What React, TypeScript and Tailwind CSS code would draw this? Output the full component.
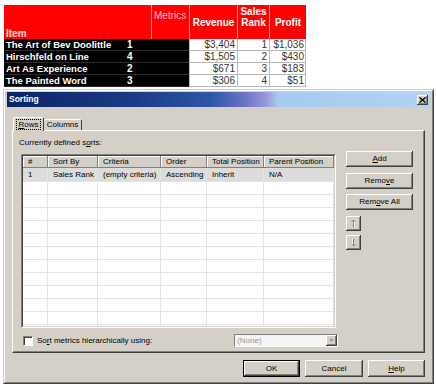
import React from "react";

const rows = [
  { name: "The Art of Bev Doolittle", id: "1", revenue: "$3,404", rank: "1", profit: "$1,036" },
  { name: "Hirschfeld on Line", id: "4", revenue: "$1,505", rank: "2", profit: "$430" },
  { name: "Art As Experience", id: "2", revenue: "$671", rank: "3", profit: "$183" },
  { name: "The Painted Word", id: "3", revenue: "$306", rank: "4", profit: "$51" },
];

const sortCols = [
  { label: "#", w: "w-[25px]" },
  { label: "Sort By", w: "w-[50px]" },
  { label: "Criteria", w: "w-[63px]" },
  { label: "Order", w: "w-[46px]" },
  { label: "Total Position", w: "w-[57px]" },
  { label: "Parent Position", w: "flex-1" },
];

const firstSort = ["1", "Sales Rank", "(empty criteria)", "Ascending", "Inherit", "N/A"];

const raised =
  "bg-[#d4d0c8] shadow-[inset_-1px_-1px_#404040,inset_1px_1px_#ffffff,inset_-2px_-2px_#808080,inset_2px_2px_#d4d0c8]";

export default function App() {
  return (
    <div className="w-[436px] h-[384px] overflow-hidden bg-white flex flex-col">
      <ReportGrid />
      <SortingDialog />
    </div>
  );
}

function ReportGrid() {
  return (
    <div className="ml-[4px] mt-[5px] w-[302px] font-['Liberation_Sans',Arial,sans-serif] text-[10px]">
      {/* header */}
      <div className="flex h-[34px] bg-[#ff0000]">
        <div className="w-[147px] flex flex-col justify-end pl-[2px] leading-[11px] font-bold text-[#ffe0e0]">
          Item
        </div>
        <div className="w-[38px] border-l border-[#ff9a9a] pl-[2px] pt-[5px] leading-[11px] text-[#ffc4c4]">
          Metrics
        </div>
        <div className="w-[48px] border-l border-[#ff9a9a] flex flex-col justify-end pb-[11px] leading-[11px] text-center font-bold text-white">
          Revenue
        </div>
        <div className="w-[32px] border-l border-[#ff9a9a] flex flex-col justify-end pb-[11px] leading-[11px] text-center font-bold text-white">
          <span>Sales</span>
          <span>Rank</span>
        </div>
        <div className="w-[37px] border-l border-[#ff9a9a] flex flex-col justify-end pb-[11px] leading-[11px] text-center font-bold text-white">
          Profit
        </div>
      </div>
      {/* body */}
      {rows.map((r) => (
        <div key={r.name} className="flex h-[12px] leading-[11px]">
          <div className="w-[123px] bg-black border-b border-[#2c2c2c] pl-[2px] text-[9.5px] font-bold text-white whitespace-nowrap">
            {r.name}
          </div>
          <div className="w-[62px] bg-black border-b border-[#2c2c2c] font-bold text-white">{r.id}</div>
          <div className="w-[48px] bg-white border-b border-l border-[#b8b8b8] pr-[2px] text-right text-[#333]">
            {r.revenue}
          </div>
          <div className="w-[32px] bg-white border-b border-l border-[#b8b8b8] pr-[2px] text-right text-[#333]">
            {r.rank}
          </div>
          <div className="w-[37px] bg-white border-b border-l border-r border-[#b8b8b8] pr-[1px] text-right text-[#333]">
            {r.profit}
          </div>
        </div>
      ))}
    </div>
  );
}

function SortingDialog() {
  return (
    <div className="ml-[3px] mt-[2px] w-[431px] h-[295px] flex flex-col bg-[#d4d0c8] border border-t-[#d4d0c8] border-l-[#d4d0c8] border-r-[#404040] border-b-[#404040] font-['Liberation_Sans',Arial,sans-serif] text-[8px] text-black">
      <div className="flex-1 flex flex-col border border-t-white border-l-white border-r-[#808080] border-b-[#808080] px-[2px] pt-[1px]">
        {/* title bar */}
        <div className="h-[15px] flex items-center justify-between pl-[2px] pr-[2px] bg-[linear-gradient(to_right,#0a246a_0%,#1c3a86_30%,#2e56a4_48%,#6a72c4_56%,#9a94dc_61%,#a6caf0_64%,#b2d2f4_100%)]">
          <span className="text-white font-bold text-[8.5px] leading-none">Sorting</span>
          <button className={`w-[11px] h-[10px] flex items-center justify-center ${raised}`}>
            <svg width="7" height="6" viewBox="0 0 7 6">
              <path d="M0.5 0.5 L6.5 5.5 M6.5 0.5 L0.5 5.5" stroke="black" strokeWidth="1.4" />
            </svg>
          </button>
        </div>

        <div className="flex-1 flex flex-col px-[5px] pt-[10px]">
          {/* tabs */}
          <div className="flex items-end h-[13px] pl-[1px] relative z-10">
            <div className="h-[14px] -mb-[1px] w-[31px] bg-[#d4d0c8] border-t border-l border-white border-r border-r-[#404040] rounded-t-[2px] flex items-center justify-center">
              <span className="border border-dotted border-black px-[1px] leading-[9px]">
                <u>R</u>ows
              </span>
            </div>
            <div className="h-[11px] w-[38px] bg-[#d4d0c8] border-t border-white border-r border-r-[#404040] rounded-t-[2px] flex items-center justify-center">
              Columns
            </div>
          </div>

          {/* tab panel */}
          <div className="h-[223px] flex flex-col border border-t-white border-l-white border-r-[#404040] border-b-[#404040]">
            <div className="flex-1 flex flex-col border-r border-b border-[#808080] pl-[8px] pr-[10px] pt-[7px]">
              <div className="-ml-[2px] leading-[10px]">
                Currently defined s<u>o</u>rts:
              </div>
              <div className="flex mt-[6px]">
                <SortList />
                <div className="ml-[10px] w-[67px] flex flex-col -mt-[3px]">
                  <WinButton className="h-[16px]">
                    <u>A</u>dd
                  </WinButton>
                  <WinButton className="h-[16px] mt-[6px]">
                    Remo<u>v</u>e
                  </WinButton>
                  <WinButton className="h-[16px] mt-[5px]">
                    Rem<u>o</u>ve All
                  </WinButton>
                  <ArrowButton up className="mt-[6px]" />
                  <ArrowButton className="mt-[4px]" />
                </div>
              </div>
              <div className="flex items-center mt-[6px] h-[13px]">
                <div className="ml-[2px] w-[10px] h-[10px] bg-white border border-t-[#808080] border-l-[#808080] border-r-white border-b-white shadow-[inset_1px_1px_#404040]" />
                <span className="ml-[4px]">
                  So<u>r</u>t metrics hierarchically using:
                </span>
                <div className="ml-[82px] w-[104px] h-[13px] flex items-stretch bg-[#f4f4f4] border border-t-[#808080] border-l-[#808080] border-r-white border-b-white">
                  <span className="flex-1 pl-[2px] leading-[11px] text-[#9a9a9a]">(None)</span>
                  <div className={`w-[11px] flex items-center justify-center ${raised}`}>
                    <svg width="5" height="3" viewBox="0 0 5 3">
                      <path d="M0 0 H5 L2.5 3 Z" fill="#9a9a9a" />
                    </svg>
                  </div>
                </div>
              </div>
            </div>
          </div>

          {/* bottom buttons */}
          <div className="flex justify-end gap-[5px] mt-[7px]">
            <div className="w-[57px] h-[17px] border border-black">
              <WinButton className="h-full w-full">OK</WinButton>
            </div>
            <WinButton className="w-[58px] h-[17px]">Cancel</WinButton>
            <WinButton className="w-[57px] h-[17px]">
              <u>H</u>elp
            </WinButton>
          </div>
        </div>
      </div>
    </div>
  );
}

function SortList() {
  const empty = Array.from({ length: 12 });
  return (
    <div className="w-[315px] h-[174px] border border-t-[#808080] border-l-[#808080] border-r-white border-b-white">
      <div className="h-full flex flex-col overflow-hidden bg-white border border-t-[#404040] border-l-[#404040] border-r-[#d4d0c8] border-b-[#d4d0c8]">
        <div className="flex h-[12px] shrink-0">
          {sortCols.map((c) => (
            <div
              key={c.label}
              className={`${c.w} bg-[#d4d0c8] pl-[5px] leading-[12px] whitespace-nowrap shadow-[inset_-1px_-1px_#808080,inset_1px_1px_#ffffff]`}
            >
              {c.label}
            </div>
          ))}
        </div>
        <div className="flex h-[14px] shrink-0 bg-[#dcdcdc] border-b border-[#e4e4e4]">
          {sortCols.map((c, i) => (
            <div key={c.label} className={`${c.w} pl-[5px] leading-[13px] whitespace-nowrap border-r border-[#e4e4e4]`}>
              {firstSort[i]}
            </div>
          ))}
        </div>
        {empty.map((_, k) => (
          <div key={k} className="flex h-[13px] shrink-0 border-b border-[#e4e4e4]">
            {sortCols.map((c) => (
              <div key={c.label} className={`${c.w} border-r border-[#e4e4e4]`} />
            ))}
          </div>
        ))}
      </div>
    </div>
  );
}

function WinButton({ children, className = "" }: { children: React.ReactNode; className?: string }) {
  return (
    <div className={`flex items-center justify-center leading-none ${raised} ${className}`}>
      <span>{children}</span>
    </div>
  );
}

function ArrowButton({ up, className = "" }: { up?: boolean; className?: string }) {
  return (
    <div className={`w-[15px] h-[15px] flex items-center justify-center ${raised} ${className}`}>
      <svg width="5" height="9" viewBox="0 0 5 9" className={up ? "" : "rotate-180"}>
        <path d="M2.5 1 V8.5 M0.5 3 L2.5 1 L4.5 3" stroke="#ffffff" strokeWidth="1" fill="none" transform="translate(0.7 0.7)" />
        <path d="M2.5 1 V8.5 M0.5 3 L2.5 1 L4.5 3" stroke="#808080" strokeWidth="1" fill="none" />
      </svg>
    </div>
  );
}
